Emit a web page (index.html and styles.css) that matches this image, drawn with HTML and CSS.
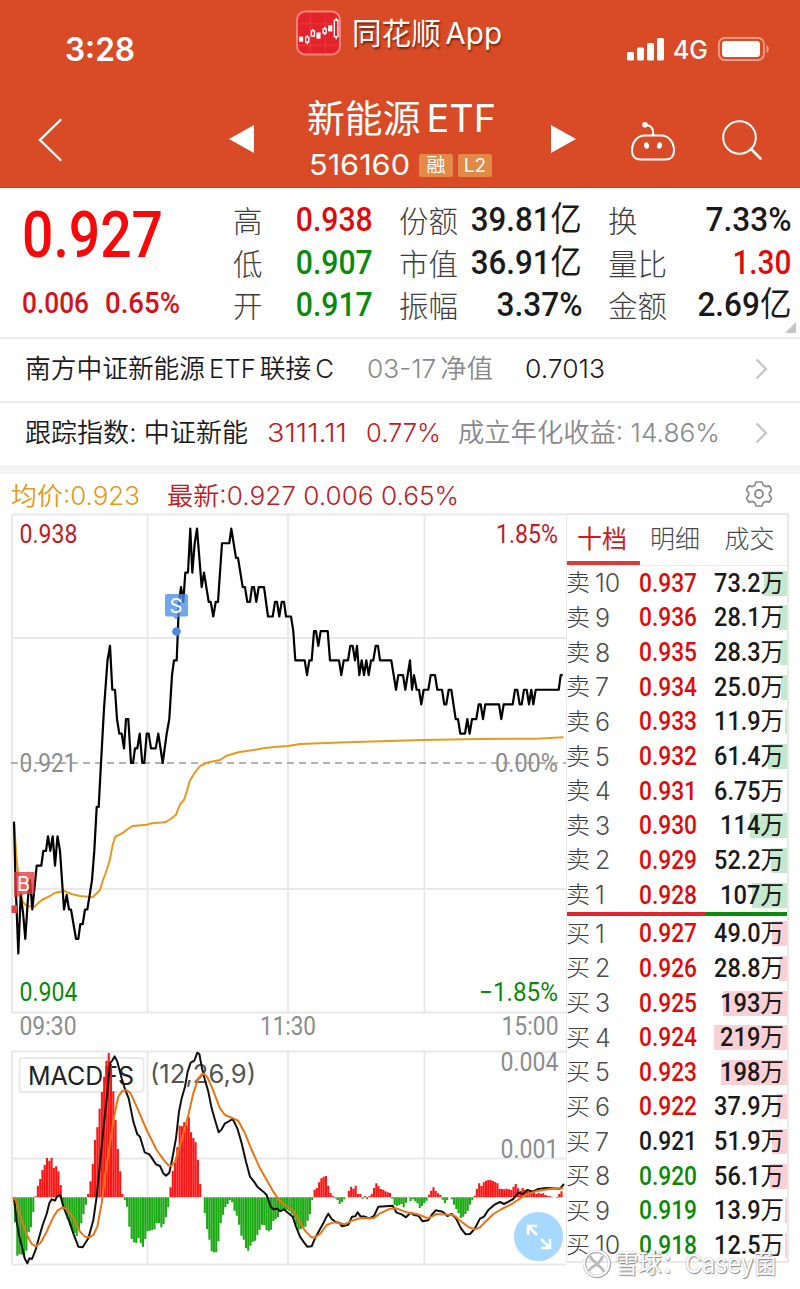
FILE: index.html
```html
<!DOCTYPE html>
<html lang="zh-CN">
<head>
<meta charset="utf-8">
<title>新能源ETF 516160</title>
<link rel="stylesheet" href="styles.css">
</head>
<body>
<header class="top">
  <div class="status">
    <span class="clock fit" data-w="70">3:28</span>
    <div class="brand">
      <svg class="brand-logo" viewBox="0 0 44 44"><rect x="1" y="1" width="42" height="42" rx="8" fill="#e3222a" stroke="#ff8078" stroke-width="2"/><path d="M2 13H42M2 34H42M14 2V42M29 2V42" stroke="#f0464a" stroke-width=".6"/><g fill="#fff" stroke="#fff"><rect x="3.500" y="26" width="3" height="4"/><rect x="20.500" y="22" width="3" height="5"/><rect x="32" y="15" width="3" height="5"/></g><path d="M9.500 26h3v5h-3zM11 24v2m0 5v2M15 20h3v5h-3zM16.500 18v2m0 5v1M26.500 18h3v4h-3zM28 16v2m0 4v2M37.500 9.500h3.500v16h-3.500zM39.300 7v2m0 17v2" fill="none" stroke="#fff" stroke-width="1.300"/></svg>
      <span class="brand-name fit" data-w="150">同花顺<i> </i>App</span>
    </div>
    <svg class="signal" viewBox="0 0 37 24"><g fill="#fff"><rect x="0" y="15" width="7" height="8.500" rx="1.500"/><rect x="10" y="10.500" width="7" height="13" rx="1.500"/><rect x="20" y="6" width="7" height="17.500" rx="1.500"/><rect x="30" y="1" width="7" height="22.500" rx="1.500"/></g></svg>
    <span class="net fit" data-w="35">4G</span>
    <svg class="battery" viewBox="0 0 52 24"><rect x=".9" y=".9" width="45" height="22.200" rx="6" fill="none" stroke="#f2a48f" stroke-width="1.700"/><rect x="4" y="4" width="38" height="16" rx="3.500" fill="#fff"/><path d="M48.500 8c3 1.500 3 6.500 0 8z" fill="#f2a48f"/></svg>
  </div>
  <div class="nav">
    <svg class="back" viewBox="0 0 26 44"><path d="M23.500 2L3 22l20.500 20" fill="none" stroke="#fff" stroke-width="2.400" stroke-linecap="round"/></svg>
    <svg class="prev" viewBox="0 0 25 28"><path d="M25 0v28L0 14z" fill="#fff"/></svg>
    <div class="title">
      <div class="name"><span class="fit" data-w="189">新能源<i> </i>ETF</span></div>
      <div class="code"><span class="num"><span class="fit" data-w="101">516160</span></span><b>融</b><b>L2</b></div>
    </div>
    <svg class="next" viewBox="0 0 25 28"><path d="M0 0v28l25-14z" fill="#fff"/></svg>
    <svg class="robot" viewBox="0 0 44 40"><g fill="none" stroke="#fff" stroke-width="2"><path d="M14 14.500h16c8 0 13 7 13 15 0 6-3 9-9 9H10c-6 0-9-3-9-9 0-8 5-15 13-15zM22 14.500c1-7-2-10.500-8-10.500"/></g><circle cx="14" cy="3.800" r="2.800" fill="#fff"/><ellipse cx="15.500" cy="24.500" rx="2.500" ry="3.200" fill="#fff" transform="rotate(-12 15.500 24.500)"/><ellipse cx="28.500" cy="24.500" rx="2.500" ry="3.200" fill="#fff" transform="rotate(12 28.500 24.500)"/></svg>
    <svg class="search" viewBox="0 0 40 40"><circle cx="17.500" cy="17.500" r="16.300" fill="none" stroke="#fff" stroke-width="2"/><path d="M29 29l9.500 9.500" stroke="#fff" stroke-width="2.600" stroke-linecap="round"/></svg>
  </div>
</header>

<section class="quote">
  <div class="last">
    <div class="price din"><span class="fit" data-w="141">0.927</span></div>
    <div class="change din"><span class="fit" data-w="67">0.006</span><span class="fit" data-w="75">0.65%</span></div>
  </div>
  <dl class="stats">
    <dt>高</dt><dd class="up"><span class="fit r" data-w="77">0.938</span></dd>
    <dt>份额</dt><dd><span class="fit r" data-w="111">39.81<em>亿</em></span></dd>
    <dt>换</dt><dd><span class="fit r" data-w="86">7.33%</span></dd>
    <dt>低</dt><dd class="down"><span class="fit r" data-w="77">0.907</span></dd>
    <dt>市值</dt><dd><span class="fit r" data-w="111">36.91<em>亿</em></span></dd>
    <dt>量比</dt><dd class="up"><span class="fit r" data-w="59">1.30</span></dd>
    <dt>开</dt><dd class="down"><span class="fit r" data-w="77">0.917</span></dd>
    <dt>振幅</dt><dd><span class="fit r" data-w="86">3.37%</span></dd>
    <dt>金额</dt><dd><span class="fit r" data-w="94">2.69<em>亿</em></span></dd>
  </dl>
  <i class="corner"></i>
</section>

<section class="link-row fund">
  <span><span class="fit" data-w="309">南方中证新能源<i> </i>ETF<i> </i>联接<i> </i>C</span></span>
  <span class="muted"><span class="fit" data-w="126">03-17<i> </i>净值</span></span>
  <span><span class="fit" data-w="80">0.7013</span></span>
  <svg class="chev" viewBox="0 0 13 22"><path d="M1.500 1.500L11 11l-9.500 9.500" fill="none" stroke="#c4c4c6" stroke-width="2.200"/></svg>
</section>
<section class="link-row index">
  <span><span class="fit" data-w="223">跟踪指数: 中证新能</span></span>
  <span class="red"><span class="fit" data-w="80">3111.11</span></span>
  <span class="red"><span class="fit" data-w="75">0.77%</span></span>
  <span class="muted"><span class="fit" data-w="262">成立年化收益: 14.86%</span></span>
  <svg class="chev" viewBox="0 0 13 22"><path d="M1.500 1.500L11 11l-9.500 9.500" fill="none" stroke="#c4c4c6" stroke-width="2.200"/></svg>
</section>

<div class="legend">
  <span class="avg"><span class="fit" data-w="129">均价:0.923</span></span>
  <span class="red"><span class="fit" data-w="292">最新:0.927 0.006 0.65%</span></span>
  <svg class="gear" viewBox="-13 -13 26 26"><path d="M-3-12h6l1.200 3.300 2.300 1.300 3.700-.8 2.500 4.200-2.300 2.600v2.800l2.300 2.600-2.500 4.200-3.700-.8L4.200 8.700 3 12h-6l-1.200-3.300-2.300-1.300-3.700.8L-12.700 4l2.300-2.600v-2.800L-12.700-4l2.500-4.200 3.700.8 2.300-1.300z" fill="none" stroke="#8a8a8e" stroke-width="1.700" stroke-linejoin="round"/><circle r="4" fill="none" stroke="#8a8a8e" stroke-width="1.900"/></svg>
</div>

<main class="market">
  <svg class="chart" viewBox="0 513 566 753">
    <path class="grid" d="M12 514.500H566M12 638H566M12 889H566M12 1012.500H566M12 514V1013M147.500 514V1013M288 514V1013M424.500 514V1013M12 1051.500H566M12 1158.500H566M12 1264.500H566M12 1051V1265M147.500 1051V1265M288 1051V1265M424.500 1051V1265"/>
    <path d="M11 763H566" stroke="#999" stroke-width="1.300" stroke-dasharray="7 5"/>
    <g class="axis">
      <text x="19.500" y="542.500" textLength="58" lengthAdjust="spacingAndGlyphs" fill="#c41a1f">0.938</text>
      <text x="496" y="542.500" textLength="62" lengthAdjust="spacingAndGlyphs" fill="#c41a1f">1.85%</text>
      <text x="19.500" y="771.500" textLength="57" lengthAdjust="spacingAndGlyphs">0.921</text>
      <text x="495" y="771.500" textLength="63" lengthAdjust="spacingAndGlyphs">0.00%</text>
      <text x="19.500" y="1001" textLength="58" lengthAdjust="spacingAndGlyphs" fill="#0a8a0a">0.904</text>
      <text x="479" y="1001" textLength="79" lengthAdjust="spacingAndGlyphs" fill="#0a8a0a">−1.85%</text>
      <text x="19.500" y="1035" textLength="57" lengthAdjust="spacingAndGlyphs">09:30</text>
      <text x="260" y="1035" textLength="56" lengthAdjust="spacingAndGlyphs">11:30</text>
      <text x="501.500" y="1035" textLength="57" lengthAdjust="spacingAndGlyphs">15:00</text>
      <text x="500.500" y="1071" textLength="58" lengthAdjust="spacingAndGlyphs">0.004</text>
      <text x="500.500" y="1157.500" textLength="58" lengthAdjust="spacingAndGlyphs">0.001</text>
    </g>
    <path id="avg" class="line" stroke="#e89a20" stroke-width="2"/>
    <path id="price" class="line" stroke="#000" stroke-width="2.200"/>
    <path d="M14 872h20.500v22H25l-8 3h-3z" fill="#e6383c" fill-opacity=".78"/>
    <text class="flag" x="17" y="890.500">B</text>
    <path d="M11.500 905.500h5.500v7.500h-5.500z" fill="#e34246"/>
    <path d="M167 594h19a2 2 0 0 1 2 2v18.500a2 2 0 0 1-2 2h-7l-3 3-3-3h-6a2 2 0 0 1-2-2V596a2 2 0 0 1 2-2z" fill="#4a8ee6" fill-opacity=".78"/>
    <text class="flag" x="169.600" y="613">S</text>
    <circle cx="176.500" cy="631.500" r="4.300" fill="#4a8be0"/>
    <rect x="19.500" y="1058" width="124" height="34" rx="3" fill="none" stroke="#e9e9eb" stroke-width="2"/>
    <text class="macd" x="28" y="1084.500" textLength="106" lengthAdjust="spacingAndGlyphs" fill="#222">MACDFS</text>
    <text class="macd" x="150" y="1083" textLength="106" lengthAdjust="spacingAndGlyphs" fill="#555">(12,26,9)</text>
    <g transform="translate(0 1040) scale(.33333)">
      <path id="up" stroke="#ff1414" stroke-width="6.200"/>
      <path id="down" stroke="#1caa14" stroke-width="6.200"/>
      <path id="dif" class="line" stroke="#111" stroke-width="6"/>
      <path id="dea" class="line" stroke="#ea7516" stroke-width="6"/>
    </g>
    <circle cx="538.500" cy="1236.500" r="24.500" fill="#a7d8ff"/>
    <path d="M528 1235v-9h9M528 1226l9 9M550 1239v9h-9M550 1248l-9-9" fill="none" stroke="#fff" stroke-width="2.500"/>
  </svg>

  <aside class="book">
    <nav class="tabs"><span class="on">十档</span><span>明细</span><span>成交</span></nav>
    <div class="rows" id="asks"></div>
    <div class="ratio"></div>
    <div class="rows" id="bids"></div>
  </aside>
</main>
<div class="mark">
  <svg viewBox="0 0 30 30"><circle cx="15" cy="15" r="12.500" fill="none" stroke="#aaa" stroke-width="3.400"/><circle cx="14.500" cy="14.500" r="12.500" fill="none" stroke="#fff" stroke-width="2"/><path d="M8 7c2 5 5 5 7 8s5 3 7 8M7 22c2-5 5-4 8-7s4-3 6-8" fill="none" stroke="#bbb" stroke-width="3"/></svg>
  <span class="fit" data-w="162">雪球：Casey菌</span>
</div>
<script src="script.js"></script>
</body>
</html>
```
FILE: styles.css
```css
* { box-sizing: border-box; }
body {
  margin: 0; width: 800px; height: 1289px; overflow: hidden; position: relative;
  background: #fff; color: #1a1a1c;
  font-family: Inter, "Noto Sans CJK SC", sans-serif;
}
svg { display: block; }
i { font-style: normal; font-size: .55em; }
em { font-style: normal; font-weight: 400; }
.fit { display: inline-block; white-space: pre; transform-origin: left center; }
.fit.r { transform-origin: right center; }
.din, .stats dd { font-family: Roboto, "Noto Sans CJK SC", sans-serif; font-weight: 500; }
.red { color: #c01c22; }
.up { color: #e00a0a; }
.down { color: #0a8a0a; }
.muted { color: #88888a; }

.top { height: 188px; background: #d94b27; color: #fff; border-bottom: 1px solid #c24a2b; }
.status { display: grid; grid-template-columns: 231px 331px 46px 45px 52px; height: 88px; padding: 10px 0 0 65px; align-items: start; }
.clock { justify-self: start; margin-top: 23px; font-size: 32px; line-height: 34px; font-weight: 600; }
.brand { display: flex; gap: 11px; }
.brand-logo { width: 45px; height: 46px; }
.brand-name { font-size: 30px; line-height: 47px; text-shadow: 1px 2px 2px rgba(90, 20, 0, .75); }
.signal { width: 37px; height: 24px; margin-top: 27px; }
.net { justify-self: start; margin-top: 23px; font-size: 25px; line-height: 34px; font-weight: 500; }
.battery { width: 52px; height: 24px; margin-top: 27px; }
.nav { display: grid; grid-template-columns: 192px 77px 245px 80px 91px 50px; padding-left: 37px; }
.back { width: 26px; height: 44px; margin-top: 30px; }
.prev, .next { width: 25px; height: 28px; margin-top: 37px; }
.name { height: 60px; line-height: 61px; font-size: 38px; }
.code { display: flex; align-items: center; height: 34px; }
.code .num { width: 112px; padding-left: 2px; font-size: 29px; line-height: 32px; }
.code b { width: 34px; height: 23px; margin-right: 5px; border-radius: 2px; background: #e38a48; text-align: center; font-weight: 400; font-size: 19px; line-height: 23px; }
.title { padding-left: 1px; }
.robot { width: 44px; height: 40px; margin-top: 33px; }
.search { width: 40px; height: 40px; margin-top: 32px; }

.quote { position: relative; display: grid; grid-template-columns: 233px 1fr; height: 151px; border-bottom: 2px solid #ececee; }
.last { padding-left: 22px; }
.price { height: 94px; font-size: 64px; line-height: 96px; color: #f80808; }
.change { display: grid; grid-template-columns: 83px 80px; font-size: 30px; line-height: 42px; color: #d8101a; }
.stats { display: grid; grid-auto-rows: 42.700px; grid-template-columns: 50px 90px 77px 132px 78px 131px; margin: 10px 0 0; }
.stats dt { font-size: 29.500px; line-height: 47px; font-weight: 300; color: #3e3e40; white-space: nowrap; }
.stats dt:nth-of-type(3n+2) { padding-left: 26px; }
.stats dt:nth-of-type(3n) { padding-left: 26px; }
.stats dd { display: flex; justify-content: flex-end; margin: 0; font-size: 34px; line-height: 42px; }
.corner { position: absolute; right: 4px; bottom: 4px; border-left: 11px solid transparent; border-bottom: 11px solid #c4c4c4; }

.link-row { display: grid; align-items: start; height: 64px; padding: 15px 0 0 25px; font-size: 26px; line-height: 30px; font-weight: 350; border-bottom: 2px solid #ececee; }
.fund { grid-template-columns: 342px 158px 230px 13px; }
.index { grid-template-columns: 242px 99px 92px 297px 13px; height: 63px; border-bottom: 0; }
.link-row > span { width: 0; white-space: nowrap; }
.chev { width: 13px; height: 22px; margin-top: 4px; }
.legend { display: grid; grid-template-columns: 156px 579px 26px; align-items: start; height: 48px; margin-top: -1px; padding: 7px 0 0 11px; border-top: 9px solid #f3f3f4; font-size: 25px; line-height: 30px; font-weight: 350; }
.avg { color: #e39a20; }
.gear { width: 26px; height: 26px; margin-top: -.500px; }

.market { display: flex; align-items: flex-start; }
.chart { width: 566px; height: 753px; flex: none; }
.grid { fill: none; stroke: #e9e9eb; stroke-width: 2; }
.line { fill: none; stroke-linejoin: round; }
.axis { font: 400 25.500px Roboto, sans-serif; fill: #8c8c8e; }
.flag { font: 400 20px Inter, sans-serif; fill: #fff; }
.macd { font: 400 25px Inter, sans-serif; }

.book { width: 223px; height: 750px; border: 2px solid #e9e9eb; border-left-width: 1px; }
.tabs { display: grid; grid-template-columns: 71px 74px 75px; height: 51px; border-bottom: 1px solid #e9e9eb; font-size: 25px; line-height: 49px; text-align: center; color: #4a4a4c; font-weight: 300; }
.tabs .on { width: 73px; height: 50px; padding-right: 3px; color: #c81e22; border-bottom: 4px solid #dc3b37; font-weight: 400; }
.row { display: grid; grid-template-columns: 28px 44px 75px 73px; height: 34.650px; align-items: center; white-space: nowrap; line-height: 34px; }
.side { font-size: 24px; font-weight: 300; color: #3e3e40; margin-left: -1px; }
.lvl { font-size: 25px; font-weight: 350; color: #4e4e50; }
.row .din { font-size: 25.500px; line-height: 33px; }
.qty { display: flex; justify-content: flex-end; align-items: center; height: 25px; padding-right: 3px; background: linear-gradient(var(--tint), var(--tint)) right center / var(--depth) 100% no-repeat; }
#asks { --tint: #c6e8cd; }
#bids { --tint: #f9d1d4; }
.ratio { height: 4px; background: linear-gradient(90deg, #dc282c 63%, #0c8a10 63%); }

.mark { position: absolute; left: 582px; top: 1249px; display: flex; gap: 3px; align-items: center; color: #fff; font-size: 26px; line-height: 30px; text-shadow: 1px 1px 1px #888, 0 0 2px #aaa; }
.mark svg { width: 30px; height: 30px; }
```
FILE: script.js
```js
// Order book: level, price, volume, depth bar width in px.
const asks = [[10,'0.937','73.2',23],[9,'0.936','28.1',8],[8,'0.935','28.3',7.5],[7,'0.934','25.0',6],[6,'0.933','11.9',2],[5,'0.932','61.4',19],[4,'0.931','6.75',0],[3,'0.930','114',37],[2,'0.929','52.2',16],[1,'0.928','107',35]];
const bids = [[1,'0.927','49.0',15],[2,'0.926','28.8',8],[3,'0.925','193',64],[4,'0.924','219',73],[5,'0.923','198',66],[6,'0.922','37.9',10],[7,'0.921','51.9',15],[8,'0.920','56.1',17],[9,'0.919','13.9',2.5],[10,'0.918','12.5',2]];
function fill(id, side, list) {
  document.getElementById(id).innerHTML = list.map(([n, p, q, w]) => {
    const tone = +p > 0.921 ? 'up' : +p < 0.921 ? 'down' : '';
    return `<div class="row"><span class="side">${side}</span><span class="lvl">${n}</span>` +
      `<span class="din ${tone}"><span class="fit" data-w="58">${p}</span></span>` +
      `<span class="din qty" style="--depth:${w}px"><span class="fit r" data-w="${q.length > 3 ? 70 : 64}">${q}<em>万</em></span></span></div>`;
  }).join('');
}
fill('asks', '卖', asks);
fill('bids', '买', bids);

// Condense or widen a label to its design width.
function fitAll() {
  document.querySelectorAll('.fit').forEach(el => {
    el.style.transform = '';
    const range = document.createRange();
    range.selectNodeContents(el);
    el.style.transform = `scaleX(${el.dataset.w / range.getBoundingClientRect().width})`;
  });
}
fitAll();

const path = pts => 'M' + pts.map(p => p.join(' ')).join('L');
const pairs = s => s.trim().split(/\s+/).map(p => p.split(',').map(Number));
const draw = (id, d) => document.getElementById(id).setAttribute('d', d);

// Minute prices: x and ticks above the previous close.
const price = pairs(`14,-4 15.5,-8 18.3,-13 20.7,-9 23,-10.200 25.3,-12 28,-9.200 30,-8 32.3,-10 34.5,-8.500 36.7,-7 41.3,-7 43.3,-6 46,-6 48,-5 50.3,-6 52.7,-5 55,-7 57.5,-5 60,-6 64,-10 66.7,-9 69,-10 71,-10 76,-12 78.3,-12 80.3,-11 82.7,-11 85,-10 87.3,-10 89.7,-9 92,-8 94.3,-6 96.7,-3 98.7,-3 101,0 104,3.7 107.5,7 110,8 112.3,5 115,5 117,3 119.3,2 121.7,2 124,1 126,3 128.3,3 131,0 133,0 135,1 137.3,1 139.7,2 142.3,0 144.3,0 146.7,2 148.7,2 151,1 155.7,1 158.3,2 162.7,0 166.7,2 169.3,3 172,6 174,7 176.7,7 179,11 181,12 183.3,11 185.3,13 188,13 190.3,16 192.3,13 194.7,15 197,16 201.7,12 204,13 208.7,11 210.7,11 213.3,10 215.7,11 218,11 222,15 229.3,15 231.3,16 236,14 238,14 242.7,12 245,12 247.3,11 250,11 252,12 254,12 256.3,11 258.7,12 264,12 268,10 272.7,10 275,11 277,11 279.3,10 281.7,11 284,11 286,10 291,10 293.3,9 295.3,7 304.7,7 307,6 309.3,7 311.7,7 314,9 316,9 318.3,8 320.7,9 327.7,9 330,7 339,7 341.3,6 343.7,7 348,7 350.3,8 352.7,8 355,7 357,8 359.3,6 361.7,7 364,6 366.3,7 368.7,6 371,7 373.3,7 375.7,8 378,8 380,7 391.3,7 393.7,6 396,5 398.3,6 403,6 405.3,5 410,7 412,5 414,6 416.7,5 419,5 421.3,4 423.7,5 428.3,5 430.7,6 435,6 437.3,5 442,5 444.3,4 446.3,4 448.7,5 451.3,5 455.7,3 458,3 460.3,2 465,2 467.3,3 469.7,2 472,3 476.3,3 478.7,4 480.7,4 483,3 485.3,4 499,4 501.3,3 503.7,4 512.7,4 515,5 517.3,5 519.7,4 521.7,4 524,5 526.7,5 529,4 531.3,5 533.3,4 535.7,5 558.7,5 560.7,6 562.7,6`);
draw('price', path(price.map(([x, n]) => [x, 763 - 14.65 * n])));
draw('avg', path(pairs(`14,822 16.5,857 19.5,887 22.7,902 26.7,906 34.3,906.7 41.7,900 50,896 55,892.7 64.3,891 71.7,894 80,896 92.7,897.3 100,890 102.7,880.7 105,875 109.3,861.7 112.7,845 115,837 122.7,833 127.7,829 132.7,826 146.7,824.7 151.7,823.3 165,822.3 170.7,819 176,814.7 180,804.3 184,800 186.7,791.7 189.7,781 195,772.3 200,766 208.3,762.3 220,760 226.7,755.7 238.3,752.3 251.7,750.3 263.3,748.3 276.7,746.7 288,746 300,744 346.7,742.3 423,740 480,739 536,738.7 563.5,737.3`)));

const bars = [-75,-175,-170,-172,-178,-160,-105,-90,-45,3,35,55,82,97,118,110,118,88,93,78,37,-28,-42,-65,-85,-97,-107,-116,-100,-78,-50,-22,10,48,100,172,210,266,316,362,410,433,400,318,232,145,78,10,-8,-28,-88,-125,-135,-137,-122,-138,-148,-125,-102,-100,-98,-96,-78,-78,-90,-80,-60,-30,30,80,105,150,215,213,225,218,240,195,178,165,112,40,0,-47,-95,-127,-162,-165,-165,-132,-78,-52,-30,-20,-8,-15,-40,-55,-82,-115,-127,-152,-160,-145,-133,-130,-113,-97,-82,-83,-98,-102,-97,-72,-65,-60,-40,-38,-37,-37,-42,-50,-62,-82,-97,-95,-92,-88,-70,-50,-8,23,28,45,57,62,64,35,13,5,-3,-8,-20,-14,-6,0,20,32,26,35,10,10,-4,4,-5,4,10,28,42,33,25,23,18,15,13,-4,-22,-26,-24,-20,-30,-16,2,-12,-6,-12,-18,-32,-26,-18,-10,8,20,30,19,12,7,-7,-17,-8,0,-6,-22,-35,-48,-62,-58,-50,-40,-22,-8,5,25,42,34,45,50,52,52,49,46,42,25,25,24,26,24,22,32,40,27,20,28,22,18,17,15,14,10,14,11,12,7,5,3,1,0,-2,10,18];
const bar = sign => bars.map((v, i) => v * sign > 0 ? `M${(45 + 6.86 * i).toFixed(1)} 472v${-v}` : '').join('');
draw('up', bar(1));
draw('down', bar(-1));
draw('dif', path(pairs(`42,475 50,545 58,590 66,620 74,655 82,670 88,655 96,657 106,632 115,600 128,555 140,522 148,490 155,478 165,482 172,468 181,466 190,500 200,525 210,550 220,580 235,620 248,622 265,595 280,540 290,470 300,370 312,250 322,160 330,70 338,60 344,49 352,65 365,115 376,150 386,175 400,245 412,283 420,290 434,337 448,343 455,353 468,373 480,378 490,400 498,407 508,398 516,360 528,295 537,215 545,175 555,140 563,95 572,68 583,62 592,38 598,42 606,85 615,120 625,155 635,205 645,240 656,277 665,268 675,250 685,245 698,237 712,265 725,310 738,365 750,410 762,425 772,440 790,455 800,465 812,500 820,508 832,506 840,514 852,508 860,515 878,530 888,560 900,590 912,607 922,620 935,619 945,595 960,568 970,550 977,535 985,521 995,537 1008,547 1018,548 1026,559 1045,554 1056,530 1066,529 1073,517 1082,530 1092,529 1108,535 1122,528 1135,500 1178,497 1190,518 1205,523 1218,532 1232,518 1242,525 1255,527 1268,544 1285,541 1295,525 1307,511 1328,515 1342,528 1355,522 1368,535 1383,565 1397,583 1410,582 1425,565 1440,536 1452,530 1465,510 1485,493 1500,486 1512,492 1540,477 1555,458 1568,462 1582,450 1598,455 1615,447 1640,444 1680,446 1692,432`)));
draw('dea', path(pairs(`38,472 48,482 62,530 78,580 95,612 108,619 122,608 140,575 158,535 172,512 188,502 205,510 222,538 240,575 255,590 268,592 280,585 292,560 305,490 316,400 330,310 342,230 355,170 366,154 380,150 392,160 410,200 440,270 470,330 490,358 505,376 515,377 525,365 545,300 565,225 580,160 595,115 608,100 620,108 635,140 660,205 675,225 700,235 715,243 735,280 755,330 780,385 800,420 820,455 835,478 850,492 878,510 895,538 915,572 932,590 943,593 960,582 980,555 1000,547 1035,553 1055,542 1080,535 1120,535 1140,520 1170,506 1190,505 1220,517 1250,522 1285,535 1310,522 1360,525 1385,545 1405,561 1425,568 1440,562 1480,522 1505,507 1535,492 1575,466 1610,453 1650,447 1690,445`)));
```
